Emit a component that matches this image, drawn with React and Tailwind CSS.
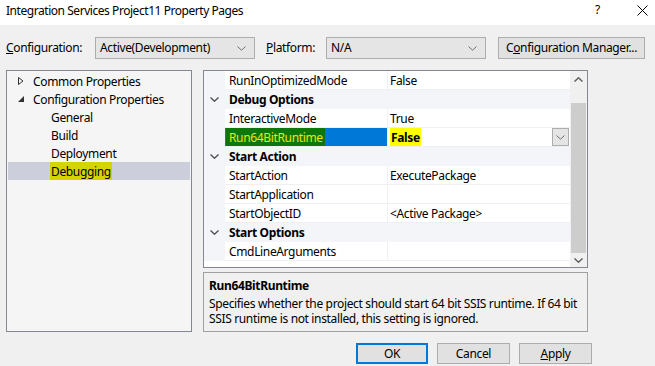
import React from "react";

const F = { fontFamily: '"Noto Sans", "Open Sans", sans-serif' };

function Chevron({ className = "", up = false, color = "#606060", w = 9, h = 5, sw = 1 }) {
  return (
    <svg width={w} height={h} viewBox={`0 0 ${w} ${h}`} className={className}>
      <polyline
        points={up ? `0.5,${h - 0.5} ${w / 2},0.8 ${w - 0.5},${h - 0.5}` : `0.5,0.5 ${w / 2},${h - 0.8} ${w - 0.5},0.5`}
        fill="none"
        stroke={color}
        strokeWidth={sw}
      />
    </svg>
  );
}

function Dropdown({ value, className }) {
  return (
    <div className={`h-[22px] border border-[#adadad] bg-[#e5e5e5] flex items-center justify-between pl-[4px] pr-[8px] ${className}`}>
      <span>{value}</span>
      <Chevron w={9} h={5} color="#707070" />
    </div>
  );
}

function PropRow({ name, value, selected, bold }) {
  return (
    <div className="flex h-[19px]">
      <div className="w-[21px] bg-[#f3f5f9]" />
      <div className={`w-[162px] flex items-center pl-[4px] border-b border-[#eef0f4] ${selected ? "bg-[#0078d7]" : "bg-white"}`}>
        {selected ? (
          <span className="bg-[#0c780c] text-[#e8e800] pr-[2px] h-[18px] flex items-center pt-[1px] -ml-[3px] pl-[3px]">{name}</span>
        ) : (
          <span className="pt-[1px]">{name}</span>
        )}
      </div>
      <div className="w-[1px] bg-[#eef0f4]" />
      <div className="flex-1 bg-white flex items-center pl-[2px] border-b border-[#eef0f4] relative">
        {selected ? (
          <>
            <span className="bg-[#ffff00] font-bold h-[18px] flex items-center pt-[1px] px-[1px]">{value}</span>
            <div className="absolute right-[1px] top-[0px] w-[17px] h-[18px] border border-[#adadad] bg-[#e5e5e5] flex items-center justify-center">
              <Chevron w={9} h={5} color="#707070" />
            </div>
          </>
        ) : (
          <span className={`pt-[1px] ${bold ? "font-bold" : ""}`}>{value}</span>
        )}
      </div>
    </div>
  );
}

function CatRow({ name }) {
  return (
    <div className="flex h-[19px] bg-[#f3f5f9]">
      <div className="w-[21px] flex items-center justify-center">
        <Chevron w={9} h={5} color="#505050" sw={1.4} />
      </div>
      <div className="flex-1 flex items-center pl-[4px] pt-[1px] font-bold">{name}</div>
    </div>
  );
}

export default function App() {
  return (
    <div className="w-[655px] h-[366px] bg-[#f0f0f0] text-[12px] tracking-[-0.35px] text-black flex flex-col overflow-hidden leading-none" style={F}>
      {/* Title bar */}
      <div className="h-[25px] bg-white flex items-center pl-[6px] relative">
        <span className="text-[12px] tracking-[-0.45px] -mt-[3px]">Integration Services Project11 Property Pages</span>
        <span className="absolute left-[595px] top-[4px] text-[12px]">?</span>
        <svg className="absolute left-[637px] top-[5px]" width="11" height="11" viewBox="0 0 11 11">
          <path d="M0.5 0.5 L10.5 10.5 M10.5 0.5 L0.5 10.5" stroke="#000" strokeWidth="1" />
        </svg>
      </div>

      {/* Config row */}
      <div className="flex items-center mt-[12px] h-[22px] pl-[6px]">
        <span className="w-[89px]"><u>C</u>onfiguration:</span>
        <Dropdown value="Active(Development)" className="w-[160px]" />
        <span className="ml-[11px] w-[60px]"><u>P</u>latform:</span>
        <Dropdown value="N/A" className="w-[160px]" />
        <button className="ml-[12px] w-[147px] h-[22px] border border-[#adadad] bg-[#e1e1e1] flex items-center justify-center">
          <span>C<u>o</u>nfiguration Manager...</span>
        </button>
      </div>

      {/* Main */}
      <div className="flex mt-[11px] pl-[6px]">
        {/* Tree */}
        <div className="w-[186px] h-[262px] border border-[#828790] bg-[#f5f5f5] pt-[1px] px-[1px]">
          <div className="h-[18px] flex items-center">
            <svg className="ml-[10px]" width="6" height="8" viewBox="0 0 6 8">
              <path d="M0.5 0.5 L5 4 L0.5 7.5 Z" fill="none" stroke="#333" strokeWidth="1" />
            </svg>
            <span className="ml-[9px] pt-[1px]">Common Properties</span>
          </div>
          <div className="h-[18px] flex items-center">
            <svg className="ml-[10px]" width="6" height="6" viewBox="0 0 6 6">
              <path d="M6 0 L6 6 L0 6 Z" fill="#333" />
            </svg>
            <span className="ml-[9px] pt-[1px]">Configuration Properties</span>
          </div>
          <div className="h-[18px] flex items-center pt-[1px] pl-[43px]">General</div>
          <div className="h-[18px] flex items-center pt-[1px] pl-[43px]">Build</div>
          <div className="h-[18px] flex items-center pt-[1px] pl-[43px]">Deployment</div>
          <div className="h-[18px] flex items-center pl-[43px] bg-[#cccedb]">
            <span className="bg-[#d4d400] h-[18px] flex items-center pt-[1px] px-[1px] -ml-[1px]">Debugging</span>
          </div>
        </div>

        {/* Right column */}
        <div className="ml-[11px] w-[385px] flex flex-col">
          <div className="h-[198px] border border-[#828790] bg-white flex">
            <div className="flex-1 flex flex-col bg-white">
              <PropRow name="RunInOptimizedMode" value="False" />
              <CatRow name="Debug Options" />
              <PropRow name="InteractiveMode" value="True" />
              <PropRow name="Run64BitRuntime" value="False" selected />
              <CatRow name="Start Action" />
              <PropRow name="StartAction" value="ExecutePackage" />
              <PropRow name="StartApplication" value="" />
              <PropRow name="StartObjectID" value="<Active Package>" />
              <CatRow name="Start Options" />
              <PropRow name="CmdLineArguments" value="" />
            </div>
            {/* Scrollbar */}
            <div className="w-[17px] bg-[#f0f0f0] flex flex-col">
              <div className="h-[17px] flex items-center justify-center">
                <Chevron up w={9} h={5} color="#606060" sw={1.5} />
              </div>
              <div className="h-[15px]" />
              <div className="mx-[1px] h-[150px] bg-[#cdcdcd]" />
              <div className="flex-1 flex items-center justify-center">
                <Chevron w={9} h={5} color="#606060" sw={1.5} />
              </div>
            </div>
          </div>
          <div className="mt-[4px] h-[60px] border border-[#a0a0a0] bg-[#f0f0f0] pl-[5px] pr-[4px] pt-[5px]">
            <div className="font-bold leading-[16px]">Run64BitRuntime</div>
            <div className="leading-[15px] mt-[2px]">
              Specifies whether the project should start 64 bit SSIS runtime. If 64 bit SSIS runtime is not installed, this setting is ignored.
            </div>
          </div>
        </div>
      </div>

      {/* Buttons */}
      <div className="flex mt-[11px] pl-[356px] gap-[9px]">
        <button className="w-[72px] h-[21px] border-2 border-[#0078d7] bg-[#e1e1e1] flex items-center justify-center">OK</button>
        <button className="w-[73px] h-[21px] border border-[#adadad] bg-[#e1e1e1] flex items-center justify-center">Cancel</button>
        <button className="w-[73px] h-[21px] border border-[#adadad] bg-[#e1e1e1] flex items-center justify-center">
          <span><u>A</u>pply</span>
        </button>
      </div>
    </div>
  );
}
